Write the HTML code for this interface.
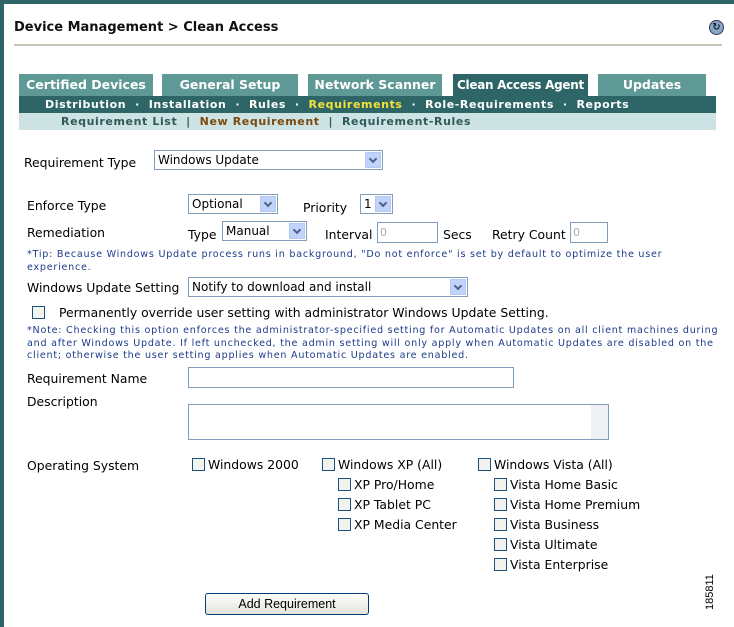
<!DOCTYPE html>
<html><head><meta charset="utf-8"><style>
*{margin:0;padding:0;box-sizing:border-box}
body{width:734px;height:627px;background:#fff;position:relative;overflow:hidden;font-family:"DejaVu Sans","Liberation Sans",sans-serif;font-size:12.4px;color:#000}
.a{position:absolute;white-space:nowrap}
.tab{position:absolute;top:74px;height:22px;background:#5f9996;color:#fff;font-weight:bold;font-size:12.5px;text-align:center;line-height:22px;white-space:nowrap;overflow:hidden}
.sel{background:#2e6566}
.sub{font-weight:bold;font-size:11px;color:#fff;letter-spacing:0.6px}
.sel2{position:absolute;border:1px solid #7f9db9;background:#fff;height:20px;font-size:12px;line-height:18px;padding-left:3px}
.sel2 i{position:absolute;right:1px;top:1px;width:16px;height:16px;background:#c1d3fb;border:1px solid #b4c8f0}
.sel2 i:after{content:"";position:absolute;left:4px;top:3px;width:4px;height:4px;border-right:2px solid #4d6185;border-bottom:2px solid #4d6185;transform:rotate(45deg)}
.inp{position:absolute;border:1px solid #7f9db9;background:#fff;height:21px;color:#aaa;font-size:11px;padding-left:2px;line-height:19px}
.cb{position:absolute;width:13px;height:13px;border:1px solid #1c5180;background:#f2f2ee}
.note{font-size:9.6px;color:#1d3b8a;letter-spacing:0.75px}
</style></head><body>
<div class="a" style="left:0;top:0;width:734px;height:4px;background:#2e6566"></div>
<div class="a" style="left:0;top:0;width:4px;height:627px;background:#2e6566"></div>
<div class="a" style="left:14px;top:20px;font-weight:bold;font-size:13px;color:#111">Device Management &gt; Clean Access</div>
<div class="a" style="left:14px;top:44px;width:708px;height:2px;background:#c8c4b8"></div>
<div class="a" style="left:709px;top:20px;width:15px;height:15px;border-radius:50%;background:#8aa6c8;border:1px solid #335;color:#123;font-size:10px;line-height:13px;text-align:center;font-weight:bold">↻</div>
<div class="tab" style="left:19px;width:134px">Certified Devices</div>
<div class="tab" style="left:162px;width:136px">General Setup</div>
<div class="tab" style="left:308px;width:134px">Network Scanner</div>
<div class="tab sel" style="left:453px;width:135px;font-size:12px;letter-spacing:-0.3px">Clean Access Agent</div>
<div class="tab" style="left:598px;width:108px">Updates</div>
<div class="a" style="left:19px;top:96px;width:697px;height:17px;background:#2e6566"></div>
<div class="a sub" style="left:45px;top:98px">Distribution &nbsp;·&nbsp; Installation &nbsp;·&nbsp; Rules &nbsp;·&nbsp; <span style="color:#f5e23a">Requirements</span> &nbsp;·&nbsp; Role-Requirements &nbsp;·&nbsp; Reports</div>
<div class="a" style="left:19px;top:113px;width:697px;height:17px;background:#cde2e2"></div>
<div class="a" style="left:61px;top:115px;font-weight:bold;font-size:11px;color:#2e5a5a;letter-spacing:0.6px">Requirement List &nbsp;| &nbsp;<span style="color:#7a4a10">New Requirement</span> &nbsp;| &nbsp;Requirement-Rules</div>

<div class="a" style="left:24px;top:155px">Requirement Type</div>
<div class="sel2" style="left:154px;top:150px;width:229px">Windows Update<i></i></div>
<div class="a" style="left:27px;top:198px">Enforce Type</div>
<div class="sel2" style="left:188px;top:194px;width:90px">Optional<i></i></div>
<div class="a" style="left:303px;top:200px">Priority</div>
<div class="sel2" style="left:360px;top:194px;width:33px">1<i></i></div>
<div class="a" style="left:27px;top:225px">Remediation</div>
<div class="a" style="left:188px;top:227px">Type</div>
<div class="sel2" style="left:222px;top:221px;width:85px">Manual<i></i></div>
<div class="a" style="left:325px;top:227px">Interval</div>
<div class="inp" style="left:377px;top:222px;width:61px">0</div>
<div class="a" style="left:443px;top:227px">Secs</div>
<div class="a" style="left:492px;top:227px">Retry Count</div>
<div class="inp" style="left:570px;top:222px;width:38px">0</div>
<div class="a note" style="left:27px;top:248px;line-height:13px">*Tip: Because Windows Update process runs in background, "Do not enforce" is set by default to optimize the user<br>experience.</div>
<div class="a" style="left:27px;top:280px">Windows Update Setting</div>
<div class="sel2" style="left:188px;top:277px;width:280px">Notify to download and install<i></i></div>
<div class="cb" style="left:32px;top:306px"></div>
<div class="a" style="left:59px;top:305px">Permanently override user setting with administrator Windows Update Setting.</div>
<div class="a note" style="left:27px;top:325px;line-height:12.5px">*Note: Checking this option enforces the administrator-specified setting for Automatic Updates on all client machines during<br>and after Windows Update. If left unchecked, the admin setting will only apply when Automatic Updates are disabled on the<br>client; otherwise the user setting applies when Automatic Updates are enabled.</div>
<div class="a" style="left:27px;top:371px">Requirement Name</div>
<div class="inp" style="left:188px;top:367px;width:326px;height:21px"></div>
<div class="a" style="left:27px;top:394px">Description</div>
<div class="inp" style="left:188px;top:404px;width:421px;height:36px"></div>
<div class="a" style="left:591px;top:405px;width:17px;height:34px;background:#eef0f4"></div>
<div class="a" style="left:27px;top:458px">Operating System</div>
<div class="cb" style="left:192px;top:458px"></div><div class="a" style="left:208px;top:457px">Windows 2000</div>
<div class="cb" style="left:322px;top:458px"></div><div class="a" style="left:338px;top:457px">Windows XP (All)</div>
<div class="cb" style="left:478px;top:458px"></div><div class="a" style="left:494px;top:457px">Windows Vista (All)</div>
<div class="cb" style="left:338px;top:478px"></div><div class="a" style="left:354px;top:477px">XP Pro/Home</div>
<div class="cb" style="left:338px;top:498px"></div><div class="a" style="left:354px;top:497px">XP Tablet PC</div>
<div class="cb" style="left:338px;top:518px"></div><div class="a" style="left:354px;top:517px">XP Media Center</div>
<div class="cb" style="left:494px;top:478px"></div><div class="a" style="left:510px;top:477px">Vista Home Basic</div>
<div class="cb" style="left:494px;top:498px"></div><div class="a" style="left:510px;top:497px">Vista Home Premium</div>
<div class="cb" style="left:494px;top:518px"></div><div class="a" style="left:510px;top:517px">Vista Business</div>
<div class="cb" style="left:494px;top:538px"></div><div class="a" style="left:510px;top:537px">Vista Ultimate</div>
<div class="cb" style="left:494px;top:558px"></div><div class="a" style="left:510px;top:557px">Vista Enterprise</div>
<div class="a" style="left:205px;top:593px;width:164px;height:22px;border:1px solid #003c74;border-radius:3px;background:linear-gradient(#fff,#e4e3dc);text-align:center;line-height:20px;font-family:'Liberation Sans',sans-serif;font-size:12.5px">Add Requirement</div>
<div class="a" style="left:704px;top:610px;transform:rotate(-90deg);transform-origin:0 0;font-family:'Liberation Sans',sans-serif;font-size:11px">185811</div>
</body></html>
